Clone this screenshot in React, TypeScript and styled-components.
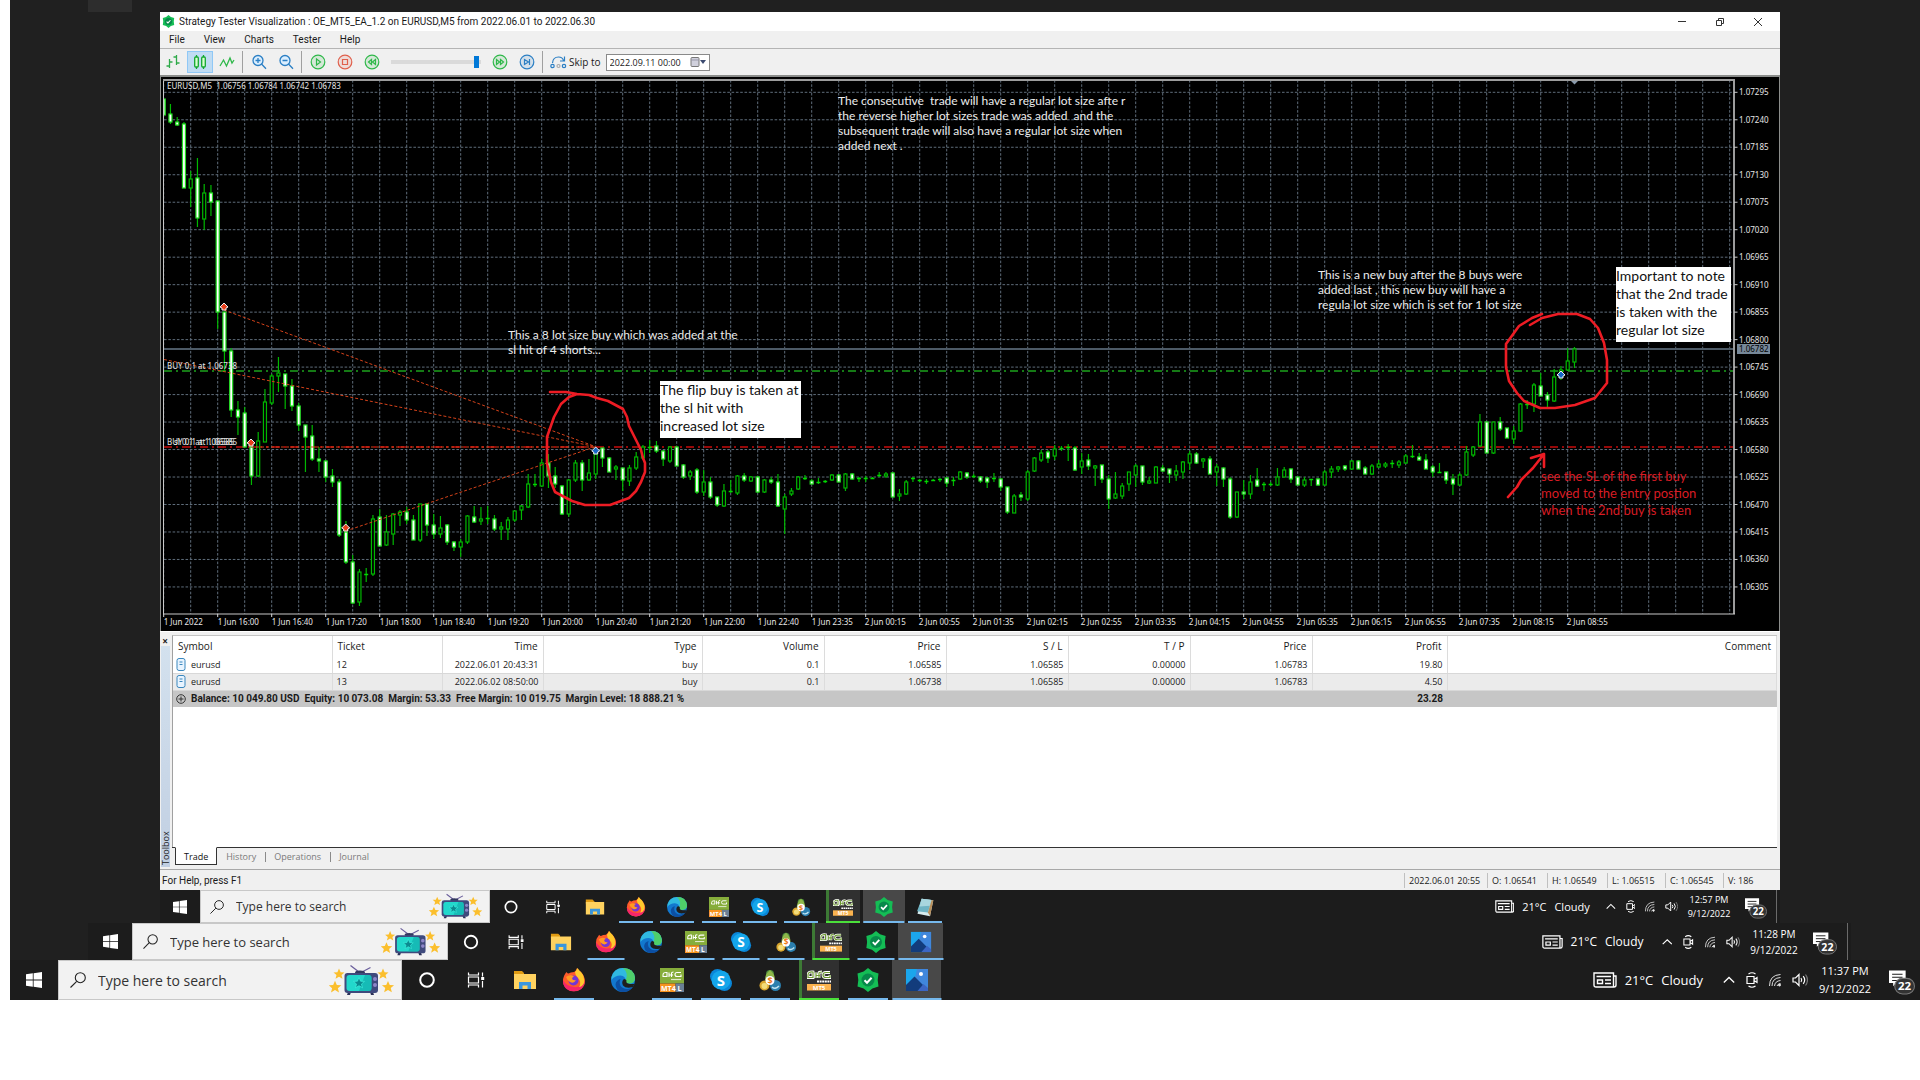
import React from "react";
import styled, { createGlobalStyle, css } from "styled-components";

const Global = createGlobalStyle`
  *, *::before, *::after { box-sizing: border-box; }
  body { margin: 0; background: #fff; font-family: "Open Sans", "Noto Sans", sans-serif; }
  button, input { font: inherit; color: inherit; margin: 0; padding: 0; border: 0; background: none; border-radius: 0; }
  svg { display: block; flex: none; }
`;

/* ---------- desktop and window shell ---------- */

const Desktop = styled.main`
  margin-left: 10px;
  background: #202020;
  display: flex;
  flex-direction: column;
`;
const Peek = styled.div`
  width: 44px;
  height: 12px;
  margin-left: 78px;
  background: #2d2d2d;
`;
const Window = styled.section`
  margin: 0 140px 0 150px;
  background: #f0f0f0;
  color: #1a1a1a;
  font-size: 10px;
  display: flex;
  flex-direction: column;
`;
const TitleBar = styled.header`
  height: 19px;
  background: #fff;
  display: flex;
  align-items: center;
  gap: 4px;
  padding: 0 5px 0 2px;
`;
const Title = styled.h1`
  margin: 0;
  flex: 1;
  font-family: Roboto, "Open Sans", sans-serif;
  font-size: 10px;
  font-weight: 400;
  line-height: 19px;
  white-space: nowrap;
`;
const Caption = styled.button`
  width: 34px;
  height: 19px;
  display: grid;
  place-items: center;
`;
const MenuBar = styled.nav`
  height: 18px;
  padding-left: 9px;
  display: flex;
  gap: 19px;
  border-bottom: 1px solid #b4b4b4;
`;
const MenuItem = styled.button`
  font-family: Roboto, "Open Sans", sans-serif;
  font-size: 10px;
  line-height: 17px;
`;
const Toolbar = styled.div`
  height: 26px;
  display: flex;
  align-items: center;
  gap: 1px;
`;
const Tool = styled.button<{ $on?: boolean }>`
  width: 26px;
  height: 22px;
  display: grid;
  place-items: center;
  ${(p) => p.$on && css`background: #c0dcf3; box-shadow: inset 0 0 0 1px #90c8f6;`}
`;
const Rule = styled.i`
  width: 1px;
  height: 22px;
  margin: 0 2px 0 1px;
  background: #a0a0a0;
`;
const Speed = styled.input`
  appearance: none;
  width: 90px;
  height: 12px;
  margin: 0 5px;
  &::-webkit-slider-runnable-track { height: 4px; background: #dadada; }
  &::-webkit-slider-thumb { appearance: none; width: 5px; height: 12px; margin-top: -4px; background: #0078d7; }
`;
const SkipLabel = styled.label`
  display: flex;
  align-items: center;
  gap: 2px;
  padding: 0 4px 0 4px;
  white-space: nowrap;
`;
const DateBox = styled.div`
  width: 104px;
  height: 17px;
  border: 1px solid #8a8a8a;
  background: #fff;
  display: flex;
  align-items: center;
  padding: 0 3px;
  input { width: 76px; font-size: 9px; line-height: 15px; height: 15px; outline: 0; }
`;

/* ---------- chart ---------- */

const ChartFrame = styled.section`
  position: relative;
  border: solid #8b8d8b;
  border-width: 2px 1px 0;
  background: #000;
`;
const ChartSvg = styled.svg`
  width: 100%;
  height: auto;
  text { font-family: "Noto Sans", sans-serif; font-size: 8px; fill: #e6e6e6; white-space: pre; }
`;
const Note = styled.p<{ $x: number; $y: number; $tone?: "box" | "red" }>`
  position: absolute;
  left: ${(p) => ((p.$x - 161) / 1618) * 100}%;
  top: ${(p) => ((p.$y - 77) / 554) * 100}%;
  margin: 0;
  font-family: Lato, "Open Sans", sans-serif;
  font-size: 12px;
  line-height: 15px;
  color: #ececec;
  white-space: pre;
  ${(p) => p.$tone === "box" && css`
    font-size: 14px; line-height: 18px; color: #111; background: #fff; padding: 0 3px 3px 0;
  `}
  ${(p) => p.$tone === "red" && css`font-size: 13px; line-height: 17px; color: #d81c24;`}
`;

const X0 = 163.7;
const STEP = 6.75;
const Y0 = 92.3;
const ROW = 27.48;

/* kind (u = up, d = down), high, body top, body bottom, low */
const CANDLES = `
d 99 99 115 115;d 104 114 122 124;d 117 122 125 126;d 122 124 188 188;u 171 179 188 207;d 158 178 218 227;u 184 193 219 230;d 185 193 202 216;
d 201 201 312 329;d 312 312 351 372;d 348 351 410 417;d 401 410 417 435;d 407 413 447 447;d 445 447 476 485;u 432 441 476 477;u 389 402 442 442;
u 374 376 403 405;u 357 373 376 392;d 374 374 386 409;d 379 386 406 411;d 403 406 425 431;d 425 425 437 472;d 425 436 459 461;d 447 459 461 472;
d 460 461 477 482;d 469 476 482 487;d 479 482 535 537;d 521 532 562 564;d 555 562 603 604;u 569 572 602 606;u 568 574 575 582;u 515 519 574 576;
d 509 517 546 546;u 515 532 545 546;u 513 514 534 545;u 510 512 515 526;d 507 512 520 524;d 515 520 540 540;u 504 504 540 542;d 504 504 525 536;
d 514 525 534 539;u 516 528 534 538;d 524 525 542 545;d 541 542 547 551;u 539 542 547 557;u 515 516 542 544;d 506 517 522 523;u 507 519 521 525;
u 506 518 519 524;d 515 519 529 531;u 522 527 529 540;u 517 520 529 540;u 511 511 520 522;u 505 506 510 520;u 474 484 507 508;u 474 484 485 487;
u 459 463 486 487;d 454 463 476 488;d 467 476 484 488;d 485 486 514 515;u 479 480 514 517;u 460 463 480 482;d 460 463 480 491;u 459 473 480 481;
u 454 454 474 479;d 448 448 458 467;d 457 458 472 472;u 465 467 469 480;d 468 468 480 491;u 465 468 481 486;u 452 457 468 470;u 445 447 458 460;
u 440 447 448 453;d 441 446 451 453;d 450 451 459 466;u 446 447 461 463;d 446 447 466 466;d 464 465 477 479;u 470 472 476 480;d 468 470 492 494;
u 470 482 492 496;d 477 482 497 499;d 497 497 505 507;u 484 491 506 507;d 480 491 492 493;u 475 476 493 495;d 473 476 480 482;u 476 477 481 482;
d 476 477 492 493;u 479 480 492 493;d 477 480 482 484;d 474 482 506 507;u 494 497 509 534;u 488 491 494 496;u 476 477 489 490;d 475 478 479 480;
d 479 481 484 484;u 478 482 483 484;d 480 481 482 483;u 474 475 480 481;d 474 475 482 482;u 473 474 488 491;d 473 474 479 480;d 477 478 479 482;
u 476 478 479 482;u 477 478 478 479;u 472 475 476 477;u 472 474 476 478;d 472 473 497 497;u 489 494 496 501;u 480 482 494 495;u 477 478 479 482;
d 479 480 481 482;u 479 481 482 484;u 479 480 481 481;u 478 479 480 482;d 477 478 483 487;u 477 480 481 486;u 471 472 479 480;d 472 473 477 479;
u 474 476 477 478;d 476 477 481 483;d 477 478 482 488;u 473 478 479 482;d 478 479 487 491;d 487 487 512 514;u 494 496 513 513;d 492 495 497 501;
u 470 472 499 501;u 457 458 471 472;u 450 453 460 462;d 450 452 458 463;u 445 449 456 460;u 446 448 449 451;d 444 447 448 461;d 446 448 470 471;
u 453 461 467 474;d 454 460 466 470;u 465 466 468 486;d 465 465 479 483;d 475 479 499 509;u 472 494 498 499;u 483 486 496 499;u 472 472 484 491;
u 464 466 475 487;d 466 466 482 485;u 477 481 483 484;u 466 467 483 483;d 465 468 471 472;d 469 469 474 483;u 465 471 475 481;u 461 462 472 479;
u 451 454 463 470;d 452 454 463 464;u 458 459 461 468;d 456 459 474 474;u 464 467 472 486;d 467 468 479 487;d 477 479 517 519;u 492 492 517 518;
d 480 492 494 499;u 475 482 494 499;d 468 480 486 487;u 482 484 485 491;u 482 484 485 486;u 468 477 485 486;u 467 470 477 477;d 468 469 479 483;
d 477 477 485 485;u 477 480 485 487;u 479 479 480 486;d 478 479 485 486;u 470 472 485 486;u 466 469 472 478;u 466 467 469 472;d 465 466 469 471;
u 460 461 469 470;d 460 461 469 469;d 466 468 474 474;u 464 466 474 475;u 460 464 467 468;u 462 464 466 468;u 460 463 464 468;u 460 462 465 468;
u 454 456 463 464;d 445 456 457 458;d 453 457 460 461;d 454 460 469 469;d 465 467 472 477;u 463 472 473 473;d 472 472 480 484;d 474 479 484 495;
u 473 475 485 486;u 446 452 475 476;u 446 447 455 457;u 414 422 446 447;d 422 422 453 453;u 422 422 453 454;d 417 422 429 431;d 428 428 438 438;
u 426 431 439 444;u 403 404 431 432;u 400 404 405 409;u 383 385 404 412;d 373 386 396 396;d 392 395 400 407;u 369 377 401 402;u 366 370 375 380;
u 348 361 370 371;u 347 349 362 368`
  .trim()
  .split(";")
  .map((row) => {
    const [kind, ...n] = row.trim().split(" ");
    const [high, top, bottom, low] = n.map(Number);
    return { up: kind === "u", high, top, bottom, low };
  });

const TIMES = [
  "1 Jun 2022", "1 Jun 16:00", "1 Jun 16:40", "1 Jun 17:20", "1 Jun 18:00", "1 Jun 18:40", "1 Jun 19:20",
  "1 Jun 20:00", "1 Jun 20:40", "1 Jun 21:20", "1 Jun 22:00", "1 Jun 22:40", "1 Jun 23:35", "2 Jun 00:15",
  "2 Jun 00:55", "2 Jun 01:35", "2 Jun 02:15", "2 Jun 02:55", "2 Jun 03:35", "2 Jun 04:15", "2 Jun 04:55",
  "2 Jun 05:35", "2 Jun 06:15", "2 Jun 06:55", "2 Jun 07:35", "2 Jun 08:15", "2 Jun 08:55",
];
const PRICES = Array.from({ length: 19 }, (_, i) => (1.07295 - i * 0.00055).toFixed(5));

const Marker = ({ x, y, buy }: { x: number; y: number; buy?: boolean }) => (
  <path
    d={`M${x} ${y - 4}L${x + 4} ${y}L${x + 2} ${y + 1}V${y + 3}H${x - 2}V${y + 1}L${x - 4} ${y}Z`}
    fill={buy ? "#1768c8" : "#e8401c"}
    stroke="#f0f0f0"
    strokeWidth="1"
  />
);

function Chart() {
  return (
    <ChartFrame aria-label="EURUSD M5 chart">
      <ChartSvg viewBox="161 77 1618 554">
        <g stroke="#5f6d7b" strokeWidth="1" strokeDasharray="2.6 1.7">
          {Array.from({ length: 59 }, (_, i) => (
            <path key={i} d={`M${X0 + i * 27} 80V614`} />
          ))}
          {PRICES.map((p, i) => (
            <path key={p} d={`M164 ${Y0 + i * ROW}H1733`} />
          ))}
        </g>
        <path d="M164 349H1734" stroke="#4d5a66" strokeWidth="2" />
        <path d="M164 371H1734" stroke="#157a15" strokeWidth="2" strokeDasharray="8 4 2 4" />
        <path d="M164 447H1734" stroke="#960808" strokeWidth="2" strokeDasharray="8 4 2 4" />
        {CANDLES.map((c, i) => {
          const x = X0 + i * STEP;
          const left = i === 0 ? x : x - 1.5;
          return (
            <g key={i} stroke="#00b800" strokeWidth="1.2">
              <path d={`M${x} ${c.high}V${c.low}`} />
              {c.bottom - c.top < 2 ? (
                <path d={`M${x - 2} ${c.top + 0.5}H${x + 2}`} stroke="#00d800" strokeWidth="1.5" />
              ) : (
                <rect
                  x={left}
                  y={c.top}
                  width={x + 1.5 - left}
                  height={c.bottom - c.top}
                  fill={c.up ? "#000" : "#fff"}
                  stroke={c.up ? "#00b800" : "#22e022"}
                />
              )}
            </g>
          );
        })}
        <g fill="none" stroke="#d4421a" strokeWidth="1" strokeDasharray="3 2">
          <path d="M224 310L595.7 446.7M164 359.5L595.7 446.7M251 447H595.7M345.7 531L595.7 446.7" />
        </g>
        <Marker x={224} y={307} />
        <Marker x={251} y={443} />
        <Marker x={345.7} y={528} />
        <Marker x={595.7} y={451} buy />
        <Marker x={1561} y={375} buy />
        <path d="M1570 80H1579L1574.5 84.5Z" fill="#8a9aab" />
        <path d="M163.5 80V614" stroke="#c8c8c8" />
        <path d="M163 80H1734V614" fill="none" stroke="#9c9c9c" strokeWidth="2" />
        <path d="M163 614H1735" stroke="#c8c8c8" strokeWidth="1" />
        {PRICES.map((p, i) => (
          <g key={p}>
            <path d={`M1734 ${Y0 + i * ROW}h3.5`} stroke="#c8c8c8" />
            <text x="1739" y={Y0 + i * ROW + 3}>{p}</text>
          </g>
        ))}
        {TIMES.map((t, i) => (
          <g key={t}>
            <path d={`M${X0 + i * 54} 614v3`} stroke="#d8d8d8" />
            <text x={X0 + i * 54 - (i > 12 ? 1 : 0)} y="625">{t}</text>
          </g>
        ))}
        <rect x="1737" y="344" width="33" height="10" fill="#778899" />
        <text x="1739" y="352" style={{ fill: "#000" }}>1.06782</text>
        <text x="167" y="89">{"EURUSD,M5  1.06756 1.06784 1.06742 1.06783"}</text>
        <text x="167" y="369">BUY 0.1 at 1.06738</text>
        <text x="167" y="445">BUY 0.1 at 1.06585</text>
        <text x="174" y="445">sl 0.1 at 1.06585</text>
        <g fill="none" stroke="#ed1c24" strokeWidth="2.6" strokeLinejoin="round" strokeLinecap="round">
          <path d="M550 392L566 392L577 394L589 395L597 398L608 401L623 409L627 417L629 426L636 440L641 450L643 458L645 463L645 472L641 482L636 491L629 498L610 505L585 505L572 501L555 492L551 482L547 463L547 437L554 417L561 404L569 397L577 394" />
          <path d="M1542 314L1532 318L1519 326L1506 344L1506 367L1509 381L1517 393L1524 401L1540 408L1555 408L1575 405L1595 398L1607 383L1607 360L1604 343L1598 328L1590 319L1577 314L1558 314L1542 318L1530 325" />
          <path d="M1508 497L1517 487L1521 480L1533 468L1544 454M1531 458L1544 454V467" />
        </g>
      </ChartSvg>
      <Note $x={838} $y={93}>{"The consecutive  trade will have a regular lot size afte r\nthe reverse higher lot sizes trade was added  and the\nsubsequent trade will also have a regular lot size when\nadded next ."}</Note>
      <Note $x={508} $y={327}>{"This a 8 lot size buy which was added at the\nsl hit of 4 shorts..."}</Note>
      <Note $x={1318} $y={267}>{"This is a new buy after the 8 buys were\nadded last , this new buy will have a\nregula lot size which is set for 1 lot size"}</Note>
      <Note $x={660} $y={381} $tone="box">{"The flip buy is taken at\nthe sl hit with\nincreased lot size"}</Note>
      <Note $x={1616} $y={267} $tone="box">{"Important to note\nthat the 2nd trade\nis taken with the\nregular lot size"}</Note>
      <Note $x={1541} $y={468} $tone="red">{"see the SL of the first buy\nmoved to the entry postion\nwhen the 2nd buy is taken"}</Note>
    </ChartFrame>
  );
}

/* ---------- toolbox ---------- */

const Toolbox = styled.section`
  display: flex;
  border-top: 1px solid #fff;
  padding-top: 3px;
  height: 239px;
  border-bottom: 1px solid #a8a8a8;
`;
const Side = styled.aside`
  width: 10px;
  margin-right: 2px;
  display: flex;
  flex-direction: column;
  button { height: 11px; font-size: 10px; line-height: 8px; font-weight: 700; }
  div {
    flex: 1;
    margin: 0 0 2px 1px;
    background: linear-gradient(#c1cfe2, #d3e1ee);
    display: flex;
    justify-content: flex-start;
    writing-mode: vertical-rl;
    transform: rotate(180deg);
    font-size: 9px;
    line-height: 10px;
    padding-top: 2px;
  }
`;
const Panel = styled.div`
  flex: 1;
  min-width: 0;
  display: flex;
  flex-direction: column;
`;
const TableArea = styled.div`
  flex: 1;
  margin-right: 3px;
  background: #fff;
  border-top: 1px solid #c4c4c4;
  border-left: 1px solid #a0a0a0;
`;
const Trades = styled.table`
  width: 100%;
  table-layout: fixed;
  border-collapse: collapse;
  white-space: nowrap;
  font-size: 9px;
  th, td { padding: 0 4px; text-align: right; font-weight: 400; border-right: 1px solid #dcdcdc; height: 17px; line-height: 15px; }
  th { font-size: 10px; height: 20px; padding: 0 5px; }
  th:nth-child(-n + 2), td:nth-child(-n + 2) { text-align: left; }
  td:first-child { padding-left: 3px; }
  tbody td { border-bottom: 1px solid #d8d8d8; }
  tbody tr:nth-child(2) { background: #ebebeb; }
  tfoot tr { background: #c6c6c6; }
  tfoot td { font-family: Roboto, "Open Sans", sans-serif; font-size: 10px; font-weight: 700; border: 0; }
  tfoot td:nth-child(2) { text-align: right; }
`;
const Cell = styled.span`
  display: flex;
  align-items: center;
  gap: 5px;
  white-space: pre;
`;
const Tabs = styled.div`
  height: 22px;
  margin-right: 3px;
  border-top: 1px solid #333;
  display: flex;
  align-items: flex-start;
  padding-left: 3px;
`;
const Tab = styled.button<{ $on?: boolean }>`
  height: 17px;
  padding: 0 9px;
  font-size: 9px;
  line-height: 15px;
  color: #7a7a7a;
  ${(p) => p.$on && css`
    color: #111; background: #fff; border: 1px solid #333; border-top-color: #fff; margin-top: -1px; height: 18px; padding: 0 8px;
  `}
  & + & + & { background: linear-gradient(#8a8a8a, #8a8a8a) 0 4px / 1px 10px no-repeat; }
`;
const StatusBar = styled.footer`
  height: 20px;
  display: flex;
  align-items: center;
  padding: 0 0 0 2px;
  p { margin: 0; flex: 1; font-family: Roboto, "Open Sans", sans-serif; }
`;
const Stat = styled.span<{ $w: number }>`
  width: ${(p) => p.$w}px;
  padding-left: 4px;
  font-size: 9px;
  line-height: 15px;
  white-space: nowrap;
  border-left: 1px solid #c0c0c0;
`;

const COLS = [
  ["Symbol", 159], ["Ticket", 110], ["Time", 101], ["Type", 159], ["Volume", 122], ["Price", 122],
  ["S / L", 122], ["T / P", 122], ["Price", 122], ["Profit", 135], ["Comment", 0],
] as const;
const TRADES = [
  ["eurusd", "12", "2022.06.01 20:43:31", "buy", "0.1", "1.06585", "1.06585", "0.00000", "1.06783", "19.80", ""],
  ["eurusd", "13", "2022.06.02 08:50:00", "buy", "0.1", "1.06738", "1.06585", "0.00000", "1.06783", "4.50", ""],
];
const STATS: [string, number][] = [
  ["2022.06.01 20:55", 83], ["O: 1.06541", 60], ["H: 1.06549", 60], ["L: 1.06515", 58], ["C: 1.06545", 58], ["V: 186", 57],
];

/* ---------- icons ---------- */

const BADGE =
  "M12 0l4.400 3.600L22.500 5.500l-.8 6.500.8 6.500-6.100 1.900L12 24l-4.400-3.600L1.500 18.500l.8-6.500-.8-6.500 6.100-1.900z";
const BadgeArt = () => (
  <>
    <path d={BADGE} fill="#14bd55" />
    <circle cx="12" cy="12" r="6.500" fill="#07894a" />
    <path d="M8.500 12.200l2.500 2.500 4.600-5" fill="none" stroke="#fff" strokeWidth="2" />
  </>
);
const Zoom = ({ plus }: { plus?: boolean }) => (
  <svg width="16" height="16" viewBox="0 0 16 16" fill="none" stroke="#2b7fc4" strokeWidth="1.300">
    <circle cx="7" cy="6.500" r="5" fill="#dcefff" />
    <path d={"M10.500 10L15 14.800M4.500 6.500h5" + (plus ? "M7 4v5" : "")} />
  </svg>
);
const Round = ({ tone, children }: { tone: string; children: React.ReactNode }) => (
  <svg width="16" height="16" viewBox="0 0 16 16" fill="none" stroke={tone} strokeWidth="1.2">
    <circle cx="8" cy="8" r="6.800" fill={tone} fillOpacity="0.14" />
    {children}
  </svg>
);
const Doc = () => (
  <svg width="10" height="13" viewBox="0 0 10 13" fill="#e8f4ff" stroke="#3a87bd">
    <rect x="1" y=".5" width="8" height="12" rx="2" />
    <path d="M3.500 4h3M3.500 6.500h3" />
  </svg>
);

const STAR = "M0-5.500L1.600-1.800 5.500-1.600 2.500 1 3.500 4.800 0 2.700-3.500 4.800-2.500 1-5.500-1.600-1.600-1.800z";
const Tv = ({ w }: { w: number }) => (
  <svg width={w} height={w / 2} viewBox="0 0 66 33">
    <g fill="#fbbf2d">
      <path transform="translate(10 10)" d={STAR} />
      <path transform="translate(6 23) scale(1.15)" d={STAR} />
      <path transform="translate(54 10)" d={STAR} />
      <path transform="translate(59 23) scale(1.100)" d={STAR} />
    </g>
    <path d="M21.500 1.500L30 8M41.500 3.500L33 8" stroke="#6b5f9c" strokeWidth="1.300" />
    <ellipse cx="31" cy="8.500" rx="5" ry="2" fill="#33395f" />
    <path d="M19 28l-1 3h3l1-3zM44 28l1 3h-3l-1-3z" fill="#2b3158" />
    <rect x="15.500" y="9" width="33.500" height="20" rx="3" fill="#3f4a7d" />
    <rect x="17.500" y="11" width="25" height="16" rx="3" fill="#22d8cc" />
    <path d="M36 11h4q2.500 0 2.500 3v10q0 3-2.500 3H30z" fill="#0fa9a6" opacity=".6" />
    <path transform="translate(30 19)" d={STAR} fill="#0b8a90" stroke="#3ff0e0" strokeWidth=".7" />
    <g fill="#8d86c9"><circle cx="46" cy="15" r="2" /><circle cx="46" cy="21" r="2" /></g>
  </svg>
);
const WinLogo = ({ s }: { s: number }) => (
  <svg width={s} height={s} viewBox="0 0 16 16" fill="#fff">
    <path d="M0 2.300L6.800 1.300V7.600H0zM7.600 1.200L16 0V7.600H7.600zM0 8.400H6.800V14.700L0 13.700zM7.600 8.400H16V16L7.600 14.800z" />
  </svg>
);
const SearchGlyph = ({ s }: { s: number }) => (
  <svg width={s} height={s} viewBox="0 0 16 16" fill="none" stroke="#222" strokeWidth="1.100">
    <circle cx="10.300" cy="5.700" r="5" />
    <path d="M6.700 9.300L.5 15.500" />
  </svg>
);
const Cortana = () => (
  <svg viewBox="0 0 24 24"><circle cx="12" cy="12" r="6.800" fill="none" stroke="#fff" strokeWidth="2" /></svg>
);
const TaskView = () => (
  <svg viewBox="0 0 24 24" fill="none" stroke="#fff" strokeWidth="1.200">
    <path d="M4.500 4.500v2.500h10V4.500M4.500 19.500v-2.500h10v2.500M4.500 9h10v6h-10zM18.500 4.500v4M18.500 13v6.500" />
    <path d="M17.800 9.500h1.800v2h-1.800z" fill="#fff" />
  </svg>
);

type AppKey = "folder" | "firefox" | "edge" | "mt4" | "skype" | "forex" | "mt5" | "tester" | "notepad" | "photos";

const ART: Record<AppKey, React.ReactNode> = {
  folder: (
    <>
      <path d="M1 3h8l2 2v3H1z" fill="#e09b13" />
      <path d="M1 6h22v15H1z" fill="#ffd25f" />
      <path d="M6 21v-7h12v7h-3.500v-3.500h-5V21z" fill="#3a96dd" />
    </>
  ),
  firefox: (
    <>
      <path d="M12 4q2-1 3-4 2 3 3.500 3.500Q23 8 23 13.500A11 10 0 0 1 1 13Q1 8 4.500 4q1 1.500 2 1.500Q8.500 4 12 4z" fill="#ff5a2a" />
      <path d="M1 12q0 11 11 11.300Q22 23 23 13 19 20 12 19 4 18 1 12z" fill="#f5256b" />
      <path d="M13 4q1.500-1.500 2.500-4 2 3 3.500 4Q23 9 22 15q-2 4-5 4 3-5-1-9-3-3-3-6z" fill="#ffca2d" />
      <circle cx="11.500" cy="12.500" r="5" fill="#7336d6" />
      <path d="M4 9q4-3 8-.5-2 .5-2 2.500 2 2 4 1-2 4-6 2-3-2-4-5z" fill="#ff9a22" />
    </>
  ),
  edge: (
    <>
      <circle cx="12" cy="12" r="12" fill="#1278cf" />
      <path d="M.5 9Q3 0 12 0q11 0 12 10 0 5.500-6 5.500-4 0-3.500-2.500Q15 8 9.500 7.500 3.500 7.500.5 12z" fill="#30b9e0" />
      <path d="M12 0q11 0 12 10 0 5.500-6 5.500-4 0-3.500-2.500Q18 5 12 0z" fill="#4fcf6a" />
      <path d="M9.500 11Q7 17 12 20q5 2.500 10-1-4 5.500-11 5-6-1-6.500-7.500Q5 12 9.500 11z" fill="#0c4fa3" />
      <path d="M15.500 12.500q-1 3 3.500 3.500h4.500l-1.500 3q-7 2-10-1.500-2-4 1-6.500 2 0 2.500 1.500z" fill="#1e1e1e" />
    </>
  ),
  mt4: (
    <>
      <path d="M0 0h24v15.500H0z" fill="#86ad3b" />
      <path d="M7 4.500Q3 4 3 7v1.500h4zM9 9V4.500M9 7h4M11.500 9V5q0-1 2-1M21 4.500h-4q-2 0-2 2t2 2h4v-2" fill="none" stroke="#fff" strokeWidth="1.100" />
      <path d="M11 11.500h10" stroke="#dfe9c8" strokeWidth="1.200" />
      <path d="M0 15.500h15.500V24H0z" fill="#f7931e" />
      <path d="M15.500 15.500H24V24h-8.500z" fill="#6a7f95" />
      <text x="1" y="22.500" fontSize="7" fontWeight="700" fill="#fff">MT4</text>
      <text x="17.500" y="22.500" fontSize="7" fontWeight="700" fill="#fff">L</text>
    </>
  ),
  skype: (
    <>
      <circle cx="8.500" cy="8.500" r="7.500" fill="#0a86d8" />
      <circle cx="15.500" cy="15.500" r="7.500" fill="#0a86d8" />
      <circle cx="12" cy="12" r="9.500" fill="#14a5ea" />
      <text x="12" y="17.500" textAnchor="middle" fontSize="15" fontWeight="700" fill="#fff">S</text>
    </>
  ),
  forex: (
    <>
      <circle cx="12" cy="6" r="4" fill="#4c8c3c" />
      <path d="M12 2q5 4 5 10H7Q7 6 12 2z" fill="#8fb84a" />
      <circle cx="6.500" cy="17.500" r="5" fill="#d9a62e" />
      <circle cx="6.500" cy="18" r="3" fill="#f2dc7a" />
      <circle cx="17.500" cy="17.500" r="5.500" fill="#2b7fae" />
      <path d="M14 19q3 3 7-1" stroke="#bfe3f2" strokeWidth="1.500" fill="none" />
      <circle cx="12" cy="12.500" r="4.500" fill="#fff" />
      <text x="12" y="15.800" textAnchor="middle" fontSize="9" fontWeight="700" fill="#ef7a1a">$</text>
    </>
  ),
  mt5: (
    <>
      <path d="M6 4Q1 3.500 1 7v2.500h5zM9 10V4.500M9 7.500h4M12 10V5q0-1 3-1M23 4.500h-4q-3 0-3 2.500t3 2.500h4V7" fill="none" stroke="#fff" strokeWidth="2.800" />
      <path d="M6 4Q1 3.500 1 7v2.500h5zM9 10V4.500M9 7.500h4M12 10V5q0-1 3-1M23 4.500h-4q-3 0-3 2.500t3 2.500h4V7" fill="none" stroke="#6f9a34" strokeWidth="1.200" />
      <path d="M10 13.500h14" stroke="#fff" strokeWidth="2" strokeDasharray="2 .6" />
      <path d="M0 16h24v6.500H0z" fill="#fbb34f" />
      <text x="12" y="21.500" textAnchor="middle" fontSize="6" fontWeight="700" fill="#fff">MT5</text>
    </>
  ),
  tester: <BadgeArt />,
  notepad: (
    <>
      <path d="M8 2l14 2-4 19-15-3z" fill="#d8ecee" />
      <path d="M8 2l12 1.500-4.500 15L2.500 17z" fill="#6fb4c4" />
      <path d="M8 2l12 1.500-2 7-12.500 1z" fill="#a9d6de" />
      <path d="M22 4l-4 19-2.500-4.500L20 3.500z" fill="#b98f5a" />
    </>
  ),
  photos: (
    <>
      <path d="M1 1h22v22H1z" fill="#1ba6ec" />
      <path d="M12 1h11v22H7z" fill="#4a7fd8" opacity=".8" />
      <path d="M1 17l8.500-8.500L23 22v1H1z" fill="#123c7c" />
      <path d="M12.500 23l6-7 4.500 4v3z" fill="#3c66c4" />
      <circle cx="16" cy="6" r="2" fill="#fff" />
    </>
  ),
};

const News = () => (
  <svg viewBox="0 0 24 16" fill="none" stroke="#fff" strokeWidth="1.400">
    <path d="M1 1h19.500v14H3q-2 0-2-2zM20.500 4H23v9q0 2-2 2h-1.500M3.500 4.500h14.500M12 8h6M12 11.500h6M4.500 8h5v3.500h-5z" />
  </svg>
);
const Chevron = () => (
  <svg viewBox="0 0 12 16" fill="none" stroke="#fff" strokeWidth="1.300"><path d="M.8 10.500L6 5.500l5.200 5" /></svg>
);
const Meet = () => (
  <svg viewBox="0 0 12 16" fill="none" stroke="#fff" strokeWidth="1.200">
    <path d="M1 4.500h7v7H1zM8 7.500l3-2v5l-3-2M2.500 2Q6-.5 9.500 2M2.500 14Q6 16.500 9.500 14" />
  </svg>
);
const Wifi = () => (
  <svg viewBox="0 0 12 16" fill="none" stroke="#ddd" strokeWidth="1">
    <path d="M.5 14Q.5 3 11.500 2.500M3 14q0-8 8.500-8.500M5.500 14q.5-5 6-5.500M8 14q.5-2 3.500-2.500" />
    <circle cx="10.500" cy="13" r="1" fill="#fff" />
  </svg>
);
const Volume = () => (
  <svg viewBox="0 0 16 16" fill="none" stroke="#fff" strokeWidth="1.200">
    <path d="M1 6h2.500L7 2.500v11L3.500 10H1zM9 6q1.500 2 0 4M11.200 4.200q3 3.800 0 7.600" />
    <path d="M13.500 2.500q4 5.500 0 11" stroke="#777" />
  </svg>
);
const Notify = () => (
  <svg viewBox="0 0 25 24">
    <path d="M0 1h16v12H7l-3 3v-3H0z" fill="#fff" />
    <path d="M3 4.500h10M3 7.500h10M3 10.500h6" stroke="#1c1c1c" />
    <rect x="5.500" y="8.500" width="19" height="15" rx="7.500" fill="#333" stroke="#777" />
    <text x="15" y="20" textAnchor="middle" fontSize="11" fontWeight="700" fill="#fff">22</text>
  </svg>
);

/* ---------- taskbars ---------- */

type Size = {
  left: number; right: number; height: number; start: number; search: number; slot: number; apps: number;
  icon: number; bar: number; text: number; weather: number; clock: number; tv: number; tray: number;
  gapText: number; gapTray: number; clockW: number; bell: number; bellLeft: number; bellPad: number;
};

const Bar = styled.nav<{ $s: Size }>`
  margin: 0 ${(p) => p.$s.right}px 0 ${(p) => p.$s.left}px;
  height: ${(p) => p.$s.height}px;
  background: #1c1c1c;
  color: #fff;
  display: flex;
`;
const Start = styled.button<{ $s: Size }>`
  width: ${(p) => p.$s.start}px;
  display: grid;
  place-items: center;
`;
const Search = styled.label<{ $s: Size }>`
  width: ${(p) => p.$s.search}px;
  background: #f2f2f2;
  border: 1px solid #c8c8c8;
  display: flex;
  align-items: center;
  gap: 12px;
  padding: 0 6px 0 ${(p) => p.$s.icon / 2 - 1}px;
  input {
    flex: 1; min-width: 0; outline: 0; font-size: ${(p) => p.$s.text}px;
    &::placeholder { color: #333; opacity: 1; }
  }
`;
const Apps = styled.div<{ $s: Size }>`
  width: ${(p) => p.$s.apps}px;
  display: grid;
  grid-template-columns: repeat(9, 1fr);
`;
const Slot = styled.button<{ $s: Size; $line?: boolean; $active?: boolean; $alert?: boolean }>`
  position: relative;
  min-width: 0;
  display: grid;
  place-items: center;
  svg { width: ${(p) => p.$s.icon}px; height: ${(p) => p.$s.icon}px; }
  background: ${(p) =>
    p.$active ? "#484848" : p.$alert ? `linear-gradient(90deg, #3d7a35 3px, #303030 3px) center / ${p.$s.bar}px 100% no-repeat` : "none"};
  &::after {
    content: "";
    display: ${(p) => (p.$line ? "block" : "none")};
    position: absolute;
    bottom: 0;
    left: 50%;
    width: ${(p) => (p.$active ? "100%" : `${p.$s.bar}px`)};
    transform: translateX(-50%);
    height: 2px;
    background: ${(p) => (p.$alert ? "#4be03a" : "#76b9ed")};
  }
`;
const Shell = styled.div<{ $s: Size }>`
  display: flex;
  > button { width: ${(p) => p.$s.slot}px; }
`;
const Weather = styled.button<{ $s: Size }>`
  margin-left: auto;
  display: flex;
  align-items: center;
  gap: 8px;
  white-space: nowrap;
  font-size: ${(p) => p.$s.weather}px;
  svg { height: ${(p) => p.$s.tray}px; width: ${(p) => p.$s.tray * 1.5}px; }
`;
const Tray = styled.div<{ $s: Size }>`
  display: flex;
  align-items: center;
  gap: ${(p) => p.$s.gapTray}px;
  margin-left: ${(p) => p.$s.gapText}px;
  svg { height: ${(p) => p.$s.tray}px; }
`;
const Clock = styled.time<{ $s: Size }>`
  width: ${(p) => p.$s.clockW}px;
  display: flex;
  flex-direction: column;
  justify-content: center;
  text-align: center;
  font-size: ${(p) => p.$s.clock}px;
  line-height: ${(p) => Math.floor(p.$s.height * 0.45)}px;
  white-space: nowrap;
`;
const Bell = styled.button<{ $s: Size; $edge: boolean }>`
  padding: 3px ${(p) => p.$s.bellPad}px 0 ${(p) => p.$s.bellLeft}px;
  display: grid;
  place-items: center;
  svg { width: ${(p) => p.$s.bell}px; height: ${(p) => p.$s.bell}px; }
  ${(p) => p.$edge && css`border-right: 1px solid #6a6a6a; margin-right: 3px;`}
`;

const NAMES: Record<AppKey, string> = {
  folder: "File Explorer", firefox: "Firefox", edge: "Edge", mt4: "MetaTrader 4", skype: "Skype", forex: "MetaTrader",
  mt5: "MetaTrader 5", tester: "Strategy Tester", notepad: "Notepad", photos: "Photos",
};

function Taskbar({ size, time, apps, idle, active }: { size: Size; time: string; apps: AppKey[]; idle: AppKey[]; active: AppKey }) {
  return (
    <Bar $s={size}>
      <Start $s={size} aria-label="Start"><WinLogo s={size.text + 2} /></Start>
      <Search $s={size}>
        <SearchGlyph s={size.text + 2} />
        <input type="search" placeholder="Type here to search" aria-label="Search" />
        <Tv w={size.tv} />
      </Search>
      <Shell $s={size}>
        <Slot $s={size} aria-label="Cortana"><Cortana /></Slot>
        <Slot $s={size} aria-label="Task view"><TaskView /></Slot>
      </Shell>
      <Apps $s={size}>
        {apps.map((a) => (
          <Slot key={a} $s={size} $line={!idle.includes(a)} $active={a === active} $alert={a === "mt5"} aria-label={NAMES[a]}>
            <svg viewBox="0 0 24 24">{ART[a]}</svg>
          </Slot>
        ))}
      </Apps>
      <Weather $s={size}><News /><span>21°C</span><span>Cloudy</span></Weather>
      <Tray $s={size}><Chevron /><Meet /><Wifi /><Volume /></Tray>
      <Clock $s={size}><span>{time}</span><span>9/12/2022</span></Clock>
      <Bell $s={size} $edge={size.right > 0} aria-label="22 notifications"><Notify /></Bell>
    </Bar>
  );
}

const SMALL: Size = {
  left: 150, right: 140, height: 33, start: 40, search: 290, slot: 42, apps: 372, icon: 20, bar: 34, text: 12, weather: 11,
  clock: 9, tv: 54, tray: 13, gapText: 16, gapTray: 10, clockW: 62, bell: 22, bellLeft: 5, bellPad: 9,
};
const MEDIUM: Size = {
  left: 78, right: 69, height: 37, start: 44, search: 316, slot: 45, apps: 405, icon: 22, bar: 37, text: 13, weather: 12,
  clock: 10, tv: 60, tray: 14, gapText: 18, gapTray: 11, clockW: 68, bell: 24, bellLeft: 5, bellPad: 10,
};
const LARGE: Size = {
  left: 0, right: 0, height: 40, start: 48, search: 344, slot: 49, apps: 441, icon: 24, bar: 40, text: 14, weather: 13,
  clock: 11, tv: 66, tray: 16, gapText: 20, gapTray: 11, clockW: 74, bell: 26, bellLeft: 7, bellPad: 5,
};
const BASE: AppKey[] = ["folder", "firefox", "edge", "mt4", "skype", "forex", "mt5", "tester"];

export default function App() {
  return (
    <>
      <Global />
      <Desktop>
        <Peek />
        <Window>
          <TitleBar>
            <svg width="13" height="13" viewBox="0 0 24 24"><BadgeArt /></svg>
            <Title>Strategy Tester Visualization : OE_MT5_EA_1.2 on EURUSD,M5 from 2022.06.01 to 2022.06.30</Title>
            <Caption aria-label="Minimize">
              <svg width="10" height="10" stroke="#333"><path d="M1 4.500h8" /></svg>
            </Caption>
            <Caption aria-label="Restore">
              <svg width="10" height="10" fill="none" stroke="#333"><path d="M1.500 3.500h5v5h-5zM3.500 3V1.500h5v5H7" /></svg>
            </Caption>
            <Caption aria-label="Close">
              <svg width="10" height="10" stroke="#333"><path d="M1 1l8 8M9 1L1 9" /></svg>
            </Caption>
          </TitleBar>
          <MenuBar>
            {["File", "View", "Charts", "Tester", "Help"].map((m) => <MenuItem key={m}>{m}</MenuItem>)}
          </MenuBar>
          <Toolbar>
            <Tool aria-label="Bars">
              <svg width="16" height="16" fill="none" stroke="#2faa4a" strokeWidth="1.300"><path d="M4.500 5v9M4.500 8h3M1.500 12h3M11.500 1v10M8.500 3h3M11.500 9h3" /></svg>
            </Tool>
            <Tool $on aria-label="Candles">
              <svg width="16" height="16" fill="#d8ffd0" stroke="#14a830" strokeWidth="1.300"><path d="M4.500 1v14M11.500 1v14" /><rect x="2.700" y="3" width="3.600" height="10" rx="1" /><rect x="9.700" y="3" width="3.600" height="10" rx="1" /></svg>
            </Tool>
            <Tool aria-label="Line">
              <svg width="16" height="16" fill="none" stroke="#2fb84a" strokeWidth="1.300"><path d="M1 12l3.500-6 3 6 3.500-8 2 5 2-3" /></svg>
            </Tool>
            <Rule />
            <Tool aria-label="Zoom in"><Zoom plus /></Tool>
            <Tool aria-label="Zoom out"><Zoom /></Tool>
            <Rule />
            <Tool aria-label="Play"><Round tone="#2fb84a"><path d="M6.500 5l4 3-4 3z" /></Round></Tool>
            <Tool aria-label="Stop"><Round tone="#e0604c"><path d="M5.500 5.500h5v5h-5z" /></Round></Tool>
            <Tool aria-label="Slower"><Round tone="#2fb84a"><path d="M7.500 5.500L4.500 8l3 2.500zM11.500 5.500L8.500 8l3 2.500z" /></Round></Tool>
            <Speed type="range" defaultValue={98} aria-label="Speed" />
            <Tool aria-label="Faster"><Round tone="#2fb84a"><path d="M4.500 5.500L7.500 8l-3 2.500zM8.500 5.500L11.500 8l-3 2.500z" /></Round></Tool>
            <Tool aria-label="To end"><Round tone="#2b7fc4"><path d="M5.500 5.500l4 2.500-4 2.500zM10.500 5v6" /></Round></Tool>
            <Rule />
            <SkipLabel htmlFor="skip">
              <svg width="17" height="14" fill="none" stroke="#2b7fc4" strokeWidth="1.200">
                <path d="M2.500 8Q3 2 8.500 2q4 0 5 3.500M14.500 1.500V6H10" /><circle cx="2.500" cy="11" r="1.700" /><circle cx="8.500" cy="11" r="1.500" stroke="#aaa" /><circle cx="14" cy="11" r="1.700" />
              </svg>
              Skip to
            </SkipLabel>
            <DateBox>
              <input id="skip" type="text" defaultValue="2022.09.11 00:00" />
              <button aria-label="Pick a date">
                <svg width="20" height="12"><rect x="5" y="1.500" width="8" height="9" rx="1" fill="#d0d0dc" stroke="#777" /><path d="M5 4h8" stroke="#99a" /><path d="M14 4h6l-3 4z" fill="#3c4a70" /></svg>
              </button>
            </DateBox>
          </Toolbar>
          <Chart />
          <Toolbox>
            <Side>
              <button aria-label="Close toolbox">×</button>
              <div>Toolbox</div>
            </Side>
            <Panel>
              <TableArea>
                <Trades>
                  <colgroup>
                    {COLS.map(([, w], i) => <col key={i} style={w ? { width: w } : undefined} />)}
                  </colgroup>
                  <thead>
                    <tr>{COLS.map(([c], i) => <th key={i} scope="col">{c}</th>)}</tr>
                  </thead>
                  <tbody>
                    {TRADES.map((row) => (
                      <tr key={row[1]}>
                        {row.map((v, i) => <td key={i}>{i === 0 ? <Cell><Doc />{v}</Cell> : v}</td>)}
                      </tr>
                    ))}
                  </tbody>
                  <tfoot>
                    <tr>
                      <td colSpan={9}>
                        <Cell>
                          <svg width="10" height="10" fill="none" stroke="#333"><circle cx="5" cy="5" r="4.300" /><path d="M2.500 5h5M5 2.500v5" /></svg>
                          {"Balance: 10 049.80 USD  Equity: 10 073.08  Margin: 53.33  Free Margin: 10 019.75  Margin Level: 18 888.21 %"}
                        </Cell>
                      </td>
                      <td>23.28</td>
                      <td />
                    </tr>
                  </tfoot>
                </Trades>
              </TableArea>
              <Tabs role="tablist">
                <Tab $on role="tab" aria-selected>Trade</Tab>
                <Tab role="tab">History</Tab>
                <Tab role="tab">Operations</Tab>
                <Tab role="tab">Journal</Tab>
              </Tabs>
            </Panel>
          </Toolbox>
          <StatusBar>
            <p>For Help, press F1</p>
            {STATS.map(([t, w]) => <Stat key={t} $w={w}>{t}</Stat>)}
          </StatusBar>
        </Window>
        <Taskbar size={SMALL} time="12:57 PM" apps={[...BASE, "notepad"]} idle={["folder"]} active="tester" />
        <Taskbar size={MEDIUM} time="11:28 PM" apps={[...BASE, "photos"]} idle={["folder", "edge"]} active="photos" />
        <Taskbar size={LARGE} time="11:37 PM" apps={[...BASE, "photos"]} idle={["folder", "edge"]} active="photos" />
      </Desktop>
    </>
  );
}
